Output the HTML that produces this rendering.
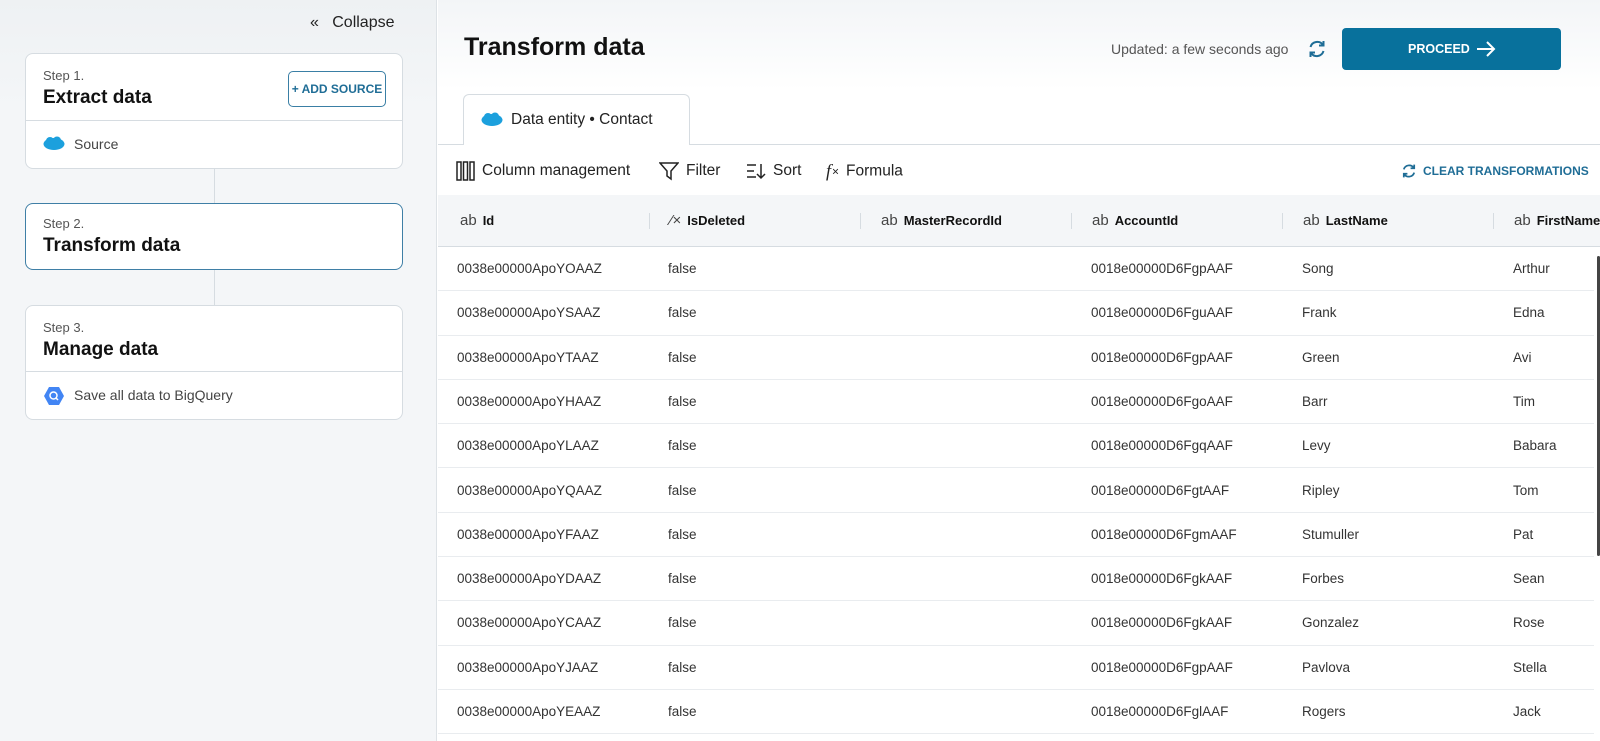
<!DOCTYPE html>
<html style="overflow:hidden;height:741px"><head><meta charset="utf-8">
<style>
*{box-sizing:border-box;margin:0;padding:0}
html,body{width:1600px;height:741px;overflow:hidden}
body{font-family:"Liberation Sans",sans-serif;color:#222;background:#fff;position:relative}
.abs{position:absolute}
#side{left:0;top:0;width:437px;height:741px;background:linear-gradient(180deg,#eef1f3 0%,#f4f6f8 15%,#f4f6f8 100%);border-right:1px solid #dde2e6}
.box{position:absolute;left:25px;width:378px;background:#fff;border:1px solid #d6dce1;border-radius:8px}
.lbl{position:absolute;left:17px;font-size:13px;color:#555}
.ttl{position:absolute;left:17px;font-size:19px;font-weight:bold;color:#111}
.vline{position:absolute;left:214px;width:1px;background:#d6dce1}
#rows{position:absolute;left:0;top:0;width:1600px;height:741px;overflow:hidden}
.row{position:absolute;left:438px;width:1156px;height:44.3px;border-bottom:1px solid #e9ecef;font-size:13.5px;color:#333}
.row span,.hd span{position:absolute;top:0;line-height:44px}
.hd{position:absolute;left:438px;top:195px;width:1162px;height:52px;background:#f4f6f8;border-bottom:1px solid #d6dce1;font-size:13px;font-weight:bold;color:#111}
.hd span{line-height:52px}
.hd i{font-style:normal;font-weight:normal;color:#444;font-size:15px;margin-right:6px}
.sep{position:absolute;top:18px;width:1px;height:16px;background:#d6dce1}
.tb{position:absolute;top:171px;transform:translateY(-50%);font-size:15.5px;color:#222;display:flex;align-items:center;gap:7px}
</style></head><body>
<div id="side" class="abs">
  <div class="abs" style="left:310px;top:14px;font-size:16px;color:#222">«&nbsp;&nbsp;&nbsp;Collapse</div>
  <div class="box" style="top:53px;height:116px">
    <div class="lbl" style="top:14px">Step 1.</div>
    <div class="ttl" style="top:33px">Extract data</div>
    <div class="abs" style="left:262px;top:17px;width:98px;height:36px;border:1px solid #3a7fa5;border-radius:5px;color:#1f6d96;font-size:12px;font-weight:bold;text-align:center;line-height:34px">+ ADD SOURCE</div>
    <div class="abs" style="left:0;top:66px;width:376px;height:1px;background:#d6dce1"></div>
    <svg class="abs" style="left:17px;top:82px" width="22" height="15" viewBox="0 0 22 15"><ellipse cx="11" cy="8" rx="10.5" ry="6" fill="#1ca0dd"/><circle cx="7" cy="5" r="4" fill="#1ca0dd"/><circle cx="14" cy="4.5" r="4" fill="#1ca0dd"/></svg>
    <div class="abs" style="left:48px;top:82px;font-size:14px;color:#444">Source</div>
  </div>
  <div class="vline" style="top:169px;height:34px"></div>
  <div class="box" style="top:203px;height:67px;border-color:#3f7fa6">
    <div class="lbl" style="top:12px">Step 2.</div>
    <div class="ttl" style="top:31px">Transform data</div>
  </div>
  <div class="vline" style="top:270px;height:35px"></div>
  <div class="box" style="top:305px;height:115px">
    <div class="lbl" style="top:14px">Step 3.</div>
    <div class="ttl" style="top:33px">Manage data</div>
    <div class="abs" style="left:0;top:65px;width:376px;height:1px;background:#d6dce1"></div>
    <svg class="abs" style="left:17px;top:80px" width="22" height="20" viewBox="0 0 22 20"><polygon points="6,1 16,1 21,10 16,19 6,19 1,10" fill="#4285f4"/><circle cx="10.5" cy="9.5" r="3.5" fill="none" stroke="#fff" stroke-width="1.5"/><line x1="13" y1="12" x2="15" y2="14" stroke="#fff" stroke-width="1.5"/></svg>
    <div class="abs" style="left:48px;top:81px;font-size:14px;color:#444">Save all data to BigQuery</div>
  </div>
</div>
<div class="abs" style="left:438px;top:0;width:1162px;height:90px;background:linear-gradient(180deg,#f3f5f7,#fff)"></div>
<div class="abs" style="left:464px;top:33px;font-size:25px;font-weight:bold;color:#111">Transform data</div>
<div class="abs" style="left:1111px;top:41px;font-size:14px;color:#555">Updated: a few seconds ago</div>
<svg class="abs" style="left:1307px;top:39px" width="20" height="20" viewBox="0 0 20 20" fill="none" stroke="#1f6d96" stroke-width="2"><path d="M3.5 8a7 7 0 0 1 12.5-2"/><path d="M16.5 12a7 7 0 0 1-12.5 2"/><path d="M16.5 2v4.5h-4.5"/><path d="M3.5 18v-4.5h4.5"/></svg>
<div class="abs" style="left:1342px;top:28px;width:219px;height:42px;background:#08719c;border-radius:4px;color:#fff;font-size:12.5px;font-weight:bold;line-height:42px;padding-left:66px">PROCEED
<svg style="position:absolute;left:133px;top:11px" width="22" height="20" viewBox="0 0 22 20" fill="none" stroke="#fff" stroke-width="2"><path d="M2 10h17M12 3l7 7-7 7"/></svg></div>
<div class="abs" style="left:438px;top:144px;width:1162px;height:1px;background:#d6dce1"></div>
<div class="abs" style="left:463px;top:94px;width:227px;height:51px;background:#fff;border:1px solid #d6dce1;border-bottom:none;border-radius:6px 6px 0 0"></div>
<svg class="abs" style="left:481px;top:112px" width="22" height="15" viewBox="0 0 22 15"><ellipse cx="11" cy="8" rx="10.5" ry="6" fill="#1ca0dd"/><circle cx="7" cy="5" r="4" fill="#1ca0dd"/><circle cx="14" cy="4.5" r="4" fill="#1ca0dd"/></svg>
<div class="abs" style="left:511px;top:111px;font-size:15.5px;color:#222">Data entity • Contact</div>
<div class="tb" style="left:456px"><svg width="19" height="20" viewBox="0 0 19 20" fill="none" stroke="#222" stroke-width="1.5"><rect x="1" y="1" width="4" height="18"/><rect x="7.5" y="1" width="4" height="18"/><rect x="14" y="1" width="4" height="18"/></svg>Column management</div>
<div class="tb" style="left:659px"><svg width="20" height="20" viewBox="0 0 20 20" fill="none" stroke="#222" stroke-width="1.5"><path d="M1 2h18l-7 8v8l-4-3v-5z"/></svg>Filter</div>
<div class="tb" style="left:746px"><svg width="20" height="18" viewBox="0 0 20 18" fill="none" stroke="#222" stroke-width="1.5"><path d="M1 3h9M1 9h7M1 15h9M15 2v14M11 12l4 4 4-4"/></svg>Sort</div>
<div class="tb" style="left:826px"><span style="font-family:'Liberation Serif',serif;font-style:italic;font-size:18px">f</span><span style="font-size:12px;margin-left:-6px">×</span>Formula</div>
<div class="abs" style="left:1401px;top:163px;display:flex;align-items:center;gap:6px;color:#1f6d96;font-size:12px;font-weight:bold">
<svg width="16" height="16" viewBox="0 0 20 20" fill="none" stroke="#1f6d96" stroke-width="2.2"><path d="M3.5 8a7 7 0 0 1 12.5-2"/><path d="M16.5 12a7 7 0 0 1-12.5 2"/><path d="M16.5 2v4.5h-4.5"/><path d="M3.5 18v-4.5h4.5"/></svg>CLEAR TRANSFORMATIONS</div>
<div class="abs" style="left:438px;top:195px;width:1162px;height:1px;background:#d6dce1"></div>
<div class="hd">
<span style="left:22px"><i>ab</i>Id</span>
<div class="sep" style="left:211px"></div><span style="left:232px"><i>⁄×</i>IsDeleted</span>
<div class="sep" style="left:422px"></div><span style="left:443px"><i>ab</i>MasterRecordId</span>
<div class="sep" style="left:633px"></div><span style="left:654px"><i>ab</i>AccountId</span>
<div class="sep" style="left:844px"></div><span style="left:865px"><i>ab</i>LastName</span>
<div class="sep" style="left:1055px"></div><span style="left:1076px"><i>ab</i>FirstName</span>
</div>
<div id="rows"></div>
<div class="abs" style="left:1597px;top:256px;width:3px;height:300px;background:#444;border-radius:2px"></div>
<script>
var d=[["YOAAZ","gpAAF","Song","Arthur"],["YSAAZ","guAAF","Frank","Edna"],["YTAAZ","gpAAF","Green","Avi"],["YHAAZ","goAAF","Barr","Tim"],["YLAAZ","gqAAF","Levy","Babara"],["YQAAZ","gtAAF","Ripley","Tom"],["YFAAZ","gmAAF","Stumuller","Pat"],["YDAAZ","gkAAF","Forbes","Sean"],["YCAAZ","gkAAF","Gonzalez","Rose"],["YJAAZ","gpAAF","Pavlova","Stella"],["YEAAZ","glAAF","Rogers","Jack"]];
var h="";d.forEach(function(r,i){h+='<div class="row" style="top:'+(247+i*44.3)+'px"><span style="left:19px">0038e00000Apo'+r[0]+'</span><span style="left:230px">false</span><span style="left:653px">0018e00000D6F'+r[1]+'</span><span style="left:864px">'+r[2]+'</span><span style="left:1075px">'+r[3]+'</span></div>'});
document.getElementById("rows").innerHTML=h;
</script>
</body></html>
